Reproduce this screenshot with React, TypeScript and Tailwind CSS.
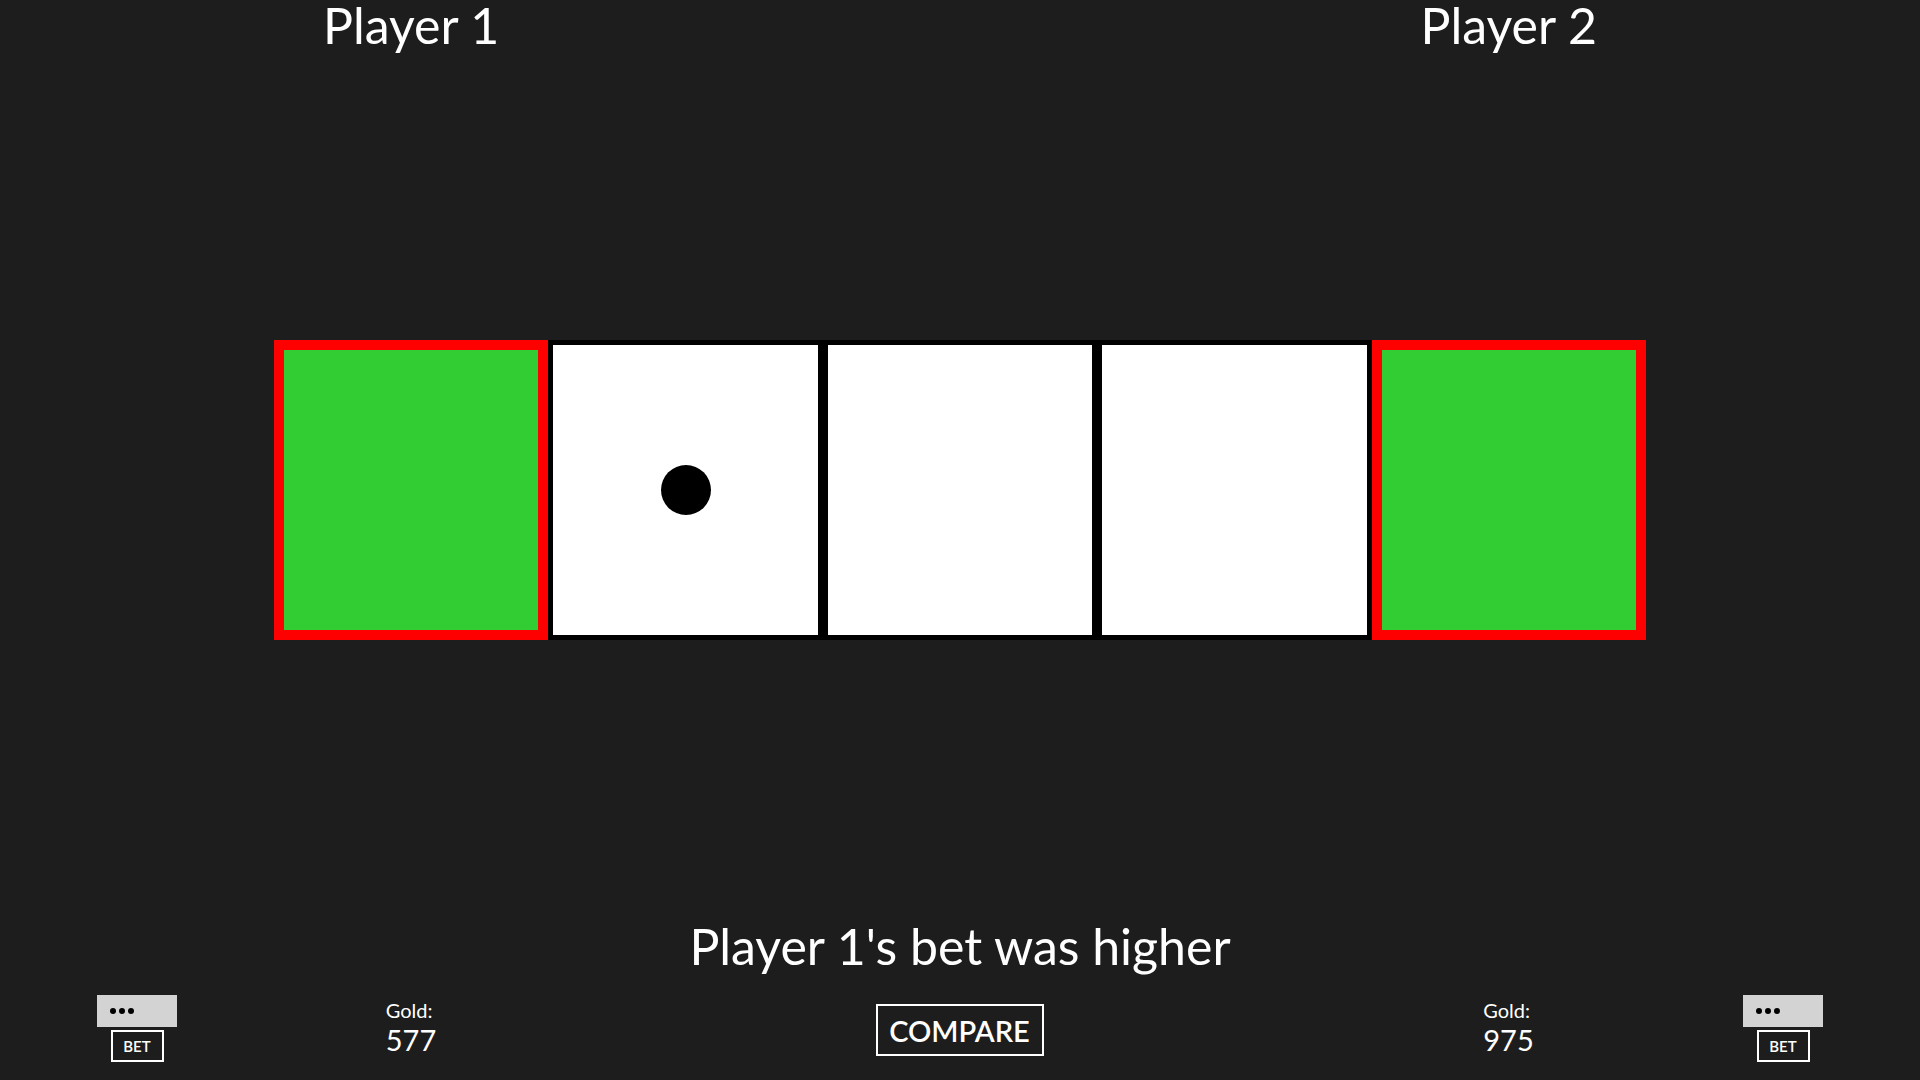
import React from "react";

function Controls() {
  return (
    <div className="flex w-[80px] flex-col items-center">
      <div className="flex h-[32px] w-[80px] items-center gap-[3px] bg-[#d3d3d3] pl-[13px]">
        <span className="h-[6px] w-[6px] rounded-full bg-black" />
        <span className="h-[6px] w-[6px] rounded-full bg-black" />
        <span className="h-[6px] w-[6px] rounded-full bg-black" />
      </div>
      <button className="mt-[3px] flex h-[32px] w-[53px] items-center justify-center border-2 border-white text-[15px] font-semibold leading-none text-white">
        BET
      </button>
    </div>
  );
}

function Gold({ value }: { value: number }) {
  return (
    <div className="flex justify-center">
      <div className="mt-[5px] flex flex-col items-start text-white">
        <span className="text-[20px] leading-none">Gold:</span>
        <span className="mt-[5px] text-[29px] leading-none">{value}</span>
      </div>
    </div>
  );
}

export default function App() {
  return (
    <div className="flex h-screen w-full flex-col items-center overflow-hidden bg-[#1d1d1d] font-[family-name:Lato,sans-serif] text-white">
      <div className="grid w-[1372px] grid-cols-5">
        <div className="text-center text-[50px] leading-none">Player 1</div>
        <div />
        <div />
        <div />
        <div className="text-center text-[50px] leading-none">Player 2</div>
      </div>

      <div className="mt-[290px] grid h-[300px] w-[1372px] grid-cols-5">
        <div className="border-[10px] border-[#ff0000] bg-[#32cd32]" />
        <div className="flex items-center justify-center border-[5px] border-black bg-white">
          <div className="h-[50px] w-[50px] rounded-full bg-black" />
        </div>
        <div className="border-[5px] border-black bg-white" />
        <div className="border-[5px] border-black bg-white" />
        <div className="border-[10px] border-[#ff0000] bg-[#32cd32]" />
      </div>

      <div className="mt-[281px] text-[50px] leading-none">Player 1's bet was higher</div>

      <div className="mt-[24px] flex w-[1920px] items-start">
        <div className="ml-[97px]">
          <Controls />
        </div>
        <div className="ml-[97px] w-[274px]">
          <Gold value={577} />
        </div>
        <div className="flex w-[823px] justify-center">
          <button className="mt-[9px] flex h-[52px] w-[168px] items-center justify-center border-2 border-white text-[29px] font-semibold leading-none text-white">
            COMPARE
          </button>
        </div>
        <div className="w-[275px]">
          <Gold value={975} />
        </div>
        <div className="ml-[97px]">
          <Controls />
        </div>
      </div>
    </div>
  );
}
